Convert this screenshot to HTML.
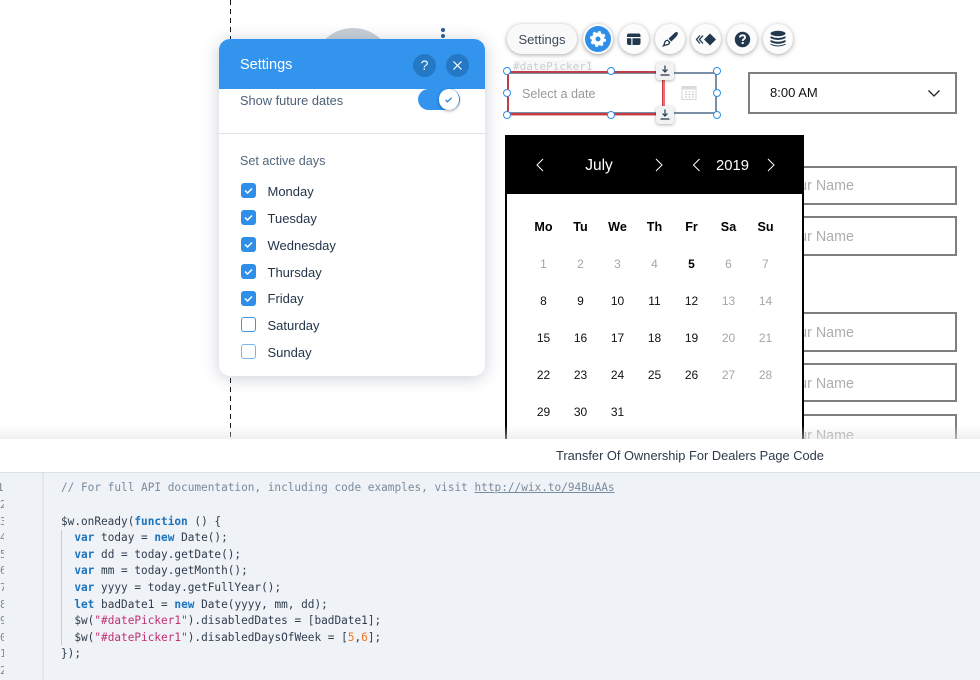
<!DOCTYPE html>
<html><head><meta charset="utf-8"><style>
html,body{margin:0;padding:0;background:#fff}
#p{position:relative;width:980px;height:680px;overflow:hidden;background:#fff;font-family:"Liberation Sans",sans-serif}
#p div,#p span.a,#p svg{position:absolute}
.f{border:2px solid #7f7f7f;box-sizing:border-box;background:#fff;left:748px;width:209px}
.ph{left:804px;width:70px;color:#adadad;font-size:14.3px;overflow:hidden;white-space:nowrap;text-indent:-21px}
.tb{width:30px;height:30px;border-radius:50%;background:#fcfcfc;box-shadow:0 1px 5px rgba(0,0,0,.35);top:24px}
.cb{left:241px;width:15px;height:15px;border-radius:3px;background:#2f8fe8}
.ce{left:241px;width:15px;height:15px;border-radius:3px;background:#fff;border:1px solid #3f95e6;box-sizing:border-box}
.dl{left:267.5px;font-size:13px;color:#24354a;line-height:16px;white-space:nowrap}
.cl{width:37px;text-align:center;font-size:12px;color:#111;line-height:14px}
.g{color:#a6a6a6}
.hd{font-weight:bold;font-size:12.6px;color:#000}
.h{width:6px;height:6px;border:1px solid #2f8fe8;border-radius:50%;background:#fff;box-sizing:content-box}
pre{position:absolute;margin:0;left:61px;top:480.4px;font:11.08px/16.6px "DejaVu Sans Mono","Liberation Mono",monospace;color:#2f3d4d}
.k{color:#1a73bd;font-weight:bold}.s{color:#c2306f}.n{color:#f0741f}.c{color:#7a8b9c}
.ln{left:0;width:4px;overflow:hidden;font:11px/16.6px "DejaVu Sans Mono",monospace;color:#7d8a98;top:480.4px;white-space:pre;text-indent:-3px}
</style></head><body><div id="p">

<svg style="left:228px;top:0" width="4" height="440"><line x1="2.500" y1="0" x2="2.500" y2="440" stroke="#111" stroke-width="1" stroke-dasharray="5 4"/></svg>
<div style="left:313px;top:28px;width:80px;height:80px;border-radius:50%;background:#c6ced6"></div>
<div style="left:441px;top:28px;width:4px;height:4px;border-radius:50%;background:#2b5c96"></div>
<div style="left:441px;top:34px;width:4px;height:4px;border-radius:50%;background:#2b5c96"></div>

<!-- right form fields -->
<div class="f" style="top:72px;height:42px"></div>
<div style="left:770px;top:85px;font-size:13px;color:#111;line-height:16px">8:00 AM</div>
<svg style="left:927px;top:89px" width="14" height="9" viewBox="0 0 14 9"><path d="M1.500 1.500L7 7l5.500-5.500" fill="none" stroke="#222" stroke-width="1.300"/></svg>
<div class="f" style="top:166px;height:39px"></div>
<div class="f" style="top:216px;height:40px"></div>
<div class="f" style="top:312px;height:40px"></div>
<div class="f" style="top:363px;height:39px"></div>
<div class="f" style="top:414px;height:40px"></div>
<div class="ph" style="top:178px">Your Name</div>
<div class="ph" style="top:229px">Your Name</div>
<div class="ph" style="top:325px">Your Name</div>
<div class="ph" style="top:376px">Your Name</div>
<div class="ph" style="top:427.500px">Your Name</div>

<!-- calendar -->
<div style="left:505px;top:135px;width:299px;height:320px;background:#fff;border:solid #000;border-width:0 2px;box-sizing:border-box"></div>
<div style="left:505px;top:135px;width:299px;height:59px;background:#000"></div>
<svg style="left:505px;top:135px" width="299" height="59" viewBox="0 0 299 59" fill="none" stroke="#fff" stroke-width="1"><path d="M38 24l-6 6 6 6M151 24l6 6-6 6M194.500 24l-6 6 6 6M263 24l6 6-6 6"/></svg>
<div style="left:569px;top:157px;width:60px;text-align:center;color:#fff;font-size:15.500px;line-height:18px">July</div>
<div style="left:702.500px;top:157px;width:60px;text-align:center;color:#fff;font-size:14.800px;line-height:18px">2019</div>

<div class="cl hd" style="left:525px;top:220px">Mo</div><div class="cl hd" style="left:562px;top:220px">Tu</div><div class="cl hd" style="left:599px;top:220px">We</div><div class="cl hd" style="left:636px;top:220px">Th</div><div class="cl hd" style="left:673px;top:220px">Fr</div><div class="cl hd" style="left:710px;top:220px">Sa</div><div class="cl hd" style="left:747px;top:220px">Su</div>

<div class="cl g" style="left:525px;top:257px">1</div><div class="cl g" style="left:562px;top:257px">2</div><div class="cl g" style="left:599px;top:257px">3</div><div class="cl g" style="left:636px;top:257px">4</div><div class="cl" style="left:673px;top:257px;font-weight:bold;color:#000">5</div><div class="cl g" style="left:710px;top:257px">6</div><div class="cl g" style="left:747px;top:257px">7</div>

<div class="cl" style="left:525px;top:294px">8</div><div class="cl" style="left:562px;top:294px">9</div><div class="cl" style="left:599px;top:294px">10</div><div class="cl" style="left:636px;top:294px">11</div><div class="cl" style="left:673px;top:294px">12</div><div class="cl g" style="left:710px;top:294px">13</div><div class="cl g" style="left:747px;top:294px">14</div>

<div class="cl" style="left:525px;top:331px">15</div><div class="cl" style="left:562px;top:331px">16</div><div class="cl" style="left:599px;top:331px">17</div><div class="cl" style="left:636px;top:331px">18</div><div class="cl" style="left:673px;top:331px">19</div><div class="cl g" style="left:710px;top:331px">20</div><div class="cl g" style="left:747px;top:331px">21</div>

<div class="cl" style="left:525px;top:368px">22</div><div class="cl" style="left:562px;top:368px">23</div><div class="cl" style="left:599px;top:368px">24</div><div class="cl" style="left:636px;top:368px">25</div><div class="cl" style="left:673px;top:368px">26</div><div class="cl g" style="left:710px;top:368px">27</div><div class="cl g" style="left:747px;top:368px">28</div>

<div class="cl" style="left:525px;top:405px">29</div><div class="cl" style="left:562px;top:405px">30</div><div class="cl" style="left:599px;top:405px">31</div>

<!-- toolbar -->
<div style="left:507px;top:24px;width:70px;height:30px;border-radius:15px;background:#f9f9f9;box-shadow:0 1px 5px rgba(0,0,0,.35);text-align:center;font-size:13px;line-height:31px;color:#3b4a5a">Settings</div>
<div class="tb" style="left:583px;box-shadow:0 1px 5px rgba(0,0,0,.4)"></div>
<svg style="left:583px;top:24px" width="30" height="30" viewBox="0 0 30 30"><circle cx="15" cy="15" r="13" fill="#2f8fe8"/><circle cx="15" cy="15" r="4.500" fill="none" stroke="#fff" stroke-width="4"/><circle cx="15" cy="15" r="6.800" fill="none" stroke="#fff" stroke-width="2.400" stroke-dasharray="2.670 2.670"/></svg>
<div class="tb" style="left:619px"></div>
<svg style="left:619px;top:24px" width="30" height="30" viewBox="0 0 30 30"><path d="M8 11.500Q8 9.500 10 9.500H19.500Q21.500 9.500 21.500 11.500V13H8zM8 14.200H12.300V21H10Q8 21 8 19zM13.500 14.200H21.500V19Q21.500 21 19.500 21H13.500z" fill="#22384f"/></svg>
<div class="tb" style="left:655px"></div>
<svg style="left:655px;top:24px" width="30" height="30" viewBox="0 0 30 30"><path d="M22.500 8.300Q23.800 9.800 21 13L16.300 17.500 13.500 14.800 18.500 10Q21 7.300 22.500 8.300z" fill="#22384f"/><path d="M12.500 16.200L14.700 18.400Q14 20.800 11 20.900L8.500 21.800Q9.500 20 9.700 18.500 10.200 16.700 12.500 16.200z" fill="#fff" stroke="#22384f" stroke-width="1.300"/></svg>
<div class="tb" style="left:691px"></div>
<svg style="left:691px;top:24px" width="30" height="30" viewBox="0 0 30 30"><path d="M19 9.500L25 15.500 19 21.500 13 15.500z" fill="#22384f"/><path d="M12 11.500l-3.500 4 3.500 4M9 11.500l-3.500 4 3.500 4" fill="none" stroke="#22384f" stroke-width="1.300"/></svg>
<div class="tb" style="left:727px"></div>
<svg style="left:727px;top:24px" width="30" height="30" viewBox="0 0 30 30"><circle cx="15.500" cy="15.500" r="7.700" fill="#22384f"/><path d="M12.900 13.500Q13 11.300 15.500 11.300 18.100 11.300 18.100 13.300 18.100 14.500 16.700 15.200 15.700 15.800 15.700 17" fill="none" stroke="#fff" stroke-width="1.800"/><rect x="14.700" y="18" width="2" height="2" fill="#fff"/></svg>
<div class="tb" style="left:763px"></div>
<svg style="left:763px;top:24px" width="30" height="30" viewBox="0 0 30 30" fill="#22384f"><ellipse cx="15" cy="9.500" rx="7.500" ry="2.700"/><path d="M7.500 12.200Q15 15.700 22.500 12.200V14.300Q15 17.800 7.500 14.300zM7.500 16Q15 19.500 22.500 16V18.100Q15 21.600 7.500 18.100zM7.500 19.800Q15 23.300 22.500 19.800V20.800Q15 24.300 7.500 20.800z"/></svg>

<!-- date picker -->
<div style="left:513px;top:60px;font:11px/13px 'DejaVu Sans Mono',monospace;color:#cdcdcd;background:#f8f8f8">#datePicker1</div>
<div style="left:507px;top:72px;width:210px;height:42px;box-sizing:border-box;border:2px solid #7b8fa6"></div>
<div style="left:507px;top:71px;width:157px;height:44px;box-sizing:border-box;border:2px solid #c03c48;box-shadow:0 1px 0 #f4a5a5"></div>
<div style="left:663px;top:72px;width:2px;height:42px;background:#ef6f73"></div>
<div style="left:522px;top:86px;font-size:12.600px;line-height:16px;color:#999">Select a date</div>
<svg style="left:681px;top:85px" width="16" height="16" viewBox="0 0 16 16"><rect x="1" y="1.500" width="14" height="13" fill="#fff" stroke="#d5d5d5"/><rect x="1" y="1.500" width="14" height="3" fill="#dcdcdc"/><path d="M4 7h2M7.500 7h2M11 7h2M4 9.500h2M7.500 9.500h2M11 9.500h2M4 12h2M7.500 12h2M11 12h2" stroke="#c4c4c4"/></svg>
<div class="h" style="left:503px;top:67px"></div><div class="h" style="left:607px;top:67px"></div><div class="h" style="left:713px;top:67px"></div>
<div class="h" style="left:503px;top:89px"></div><div class="h" style="left:713px;top:89px"></div>
<div class="h" style="left:503px;top:111px"></div><div class="h" style="left:607px;top:111px"></div><div class="h" style="left:713px;top:111px"></div>
<div style="left:656px;top:62px;width:18px;height:18px;background:#f2f2f2;border-radius:3px;box-shadow:0 1px 3px rgba(0,0,0,.3)"></div>
<svg style="left:656px;top:62px" width="18" height="18" viewBox="0 0 18 18" fill="none" stroke="#22384f" stroke-width="1.200"><path d="M9 3.500V10M6.500 7.500L9 10l2.500-2.500M4.500 13h9" /></svg>
<div style="left:656px;top:106px;width:18px;height:18px;background:#f2f2f2;border-radius:3px;box-shadow:0 1px 3px rgba(0,0,0,.3)"></div>
<svg style="left:656px;top:106px" width="18" height="18" viewBox="0 0 18 18" fill="none" stroke="#22384f" stroke-width="1.200"><path d="M9 3.500V10M6.500 7.500L9 10l2.500-2.500M4.500 13h9" /></svg>

<!-- settings panel -->
<div style="left:219px;top:39px;width:266px;height:337px;background:#fff;border-radius:11px;box-shadow:0 2px 16px rgba(60,80,110,.28)"></div>
<div style="left:219px;top:39px;width:266px;height:50px;background:#3294ec;border-radius:11px 11px 0 0"></div>
<div style="left:240px;top:56px;font-size:14.500px;line-height:18px;color:#fff">Settings</div>
<div style="left:413px;top:54px;width:23px;height:23px;border-radius:50%;background:#2478c4;color:#fff;text-align:center;font-size:14px;line-height:23px">?</div>
<div style="left:446px;top:54px;width:23px;height:23px;border-radius:50%;background:#2478c4"></div>
<svg style="left:446px;top:54px" width="23" height="23" viewBox="0 0 23 23"><path d="M7.500 7.500l8 8M15.500 7.500l-8 8" stroke="#fff" stroke-width="1.200"/></svg>
<div style="left:240px;top:93px;font-size:12.800px;line-height:16px;color:#4c6177">Show future dates</div>
<div style="left:418px;top:88.500px;width:42px;height:21px;border-radius:11px;background:#3294ec"></div>
<div style="left:438.500px;top:89px;width:20.500px;height:20.500px;border-radius:50%;background:#fff;box-shadow:0 1px 3px rgba(0,0,0,.35)"></div>
<svg style="left:438px;top:89px" width="21" height="21" viewBox="0 0 21 21"><path d="M7.500 10.800l2 2 4-4" fill="none" stroke="#2f7fd0" stroke-width="1.300"/></svg>
<div style="left:219px;top:133px;width:266px;height:1px;background:#dfe3e8"></div>
<div style="left:240px;top:153px;font-size:12.600px;line-height:16px;color:#53677c">Set active days</div>

<div class="cb" style="top:183px"></div><div class="cb" style="top:210px"></div><div class="cb" style="top:237px"></div><div class="cb" style="top:264px"></div><div class="cb" style="top:291px"></div>
<div class="ce" style="top:317px"></div><div class="ce" style="top:344px;border-color:#7ab6ee"></div>
<svg style="left:241px;top:183px" width="15" height="125" viewBox="0 0 15 125" fill="none" stroke="#fff" stroke-width="1.500"><path d="M4 7.500l2.500 2.500 4.500-4.500M4 34.500l2.500 2.500 4.500-4.500M4 61.500l2.500 2.500 4.500-4.500M4 88.500l2.500 2.500 4.500-4.500M4 115.500l2.500 2.500 4.500-4.500"/></svg>
<div class="dl" style="top:184px">Monday</div>
<div class="dl" style="top:211px">Tuesday</div>
<div class="dl" style="top:237.500px">Wednesday</div>
<div class="dl" style="top:264.500px">Thursday</div>
<div class="dl" style="top:291px">Friday</div>
<div class="dl" style="top:318px">Saturday</div>
<div class="dl" style="top:345px">Sunday</div>

<!-- bottom panel -->
<div style="left:0;top:425px;width:980px;height:14px;background:linear-gradient(rgba(255,255,255,0),rgba(225,225,225,.5))"></div>
<div style="left:0;top:439px;width:980px;height:33px;background:#fff;border-bottom:1px solid #d8e0e8;box-sizing:content-box"></div>
<div style="left:556px;top:447px;font-size:12.850px;line-height:17px;color:#2c3a4b;white-space:nowrap">Transfer Of Ownership For Dealers Page Code</div>
<div style="left:0;top:473px;width:980px;height:207px;background:#eff2f6"></div>
<div style="left:42px;top:473px;width:2px;height:207px;background:#e2e7ec"></div>
<div style="left:61px;top:530px;width:1px;height:115px;background:#c5ccd3"></div>
<div class="ln">1
2
3
4
5
6
7
8
9
0
1
2</div>
<pre><span class="c">// For full API documentation, including code examples, visit <u>http://wix.to/94BuAAs</u></span>

$w.onReady(<span class="k">function</span> () {
  <span class="k">var</span> today = <span class="k">new</span> Date();
  <span class="k">var</span> dd = today.getDate();
  <span class="k">var</span> mm = today.getMonth();
  <span class="k">var</span> yyyy = today.getFullYear();
  <span class="k">let</span> badDate1 = <span class="k">new</span> Date(yyyy, mm, dd);
  $w(<span class="s">"#datePicker1"</span>).disabledDates = [badDate1];
  $w(<span class="s">"#datePicker1"</span>).disabledDaysOfWeek = [<span class="n">5</span>,<span class="n">6</span>];
});</pre>
</div></body></html>
